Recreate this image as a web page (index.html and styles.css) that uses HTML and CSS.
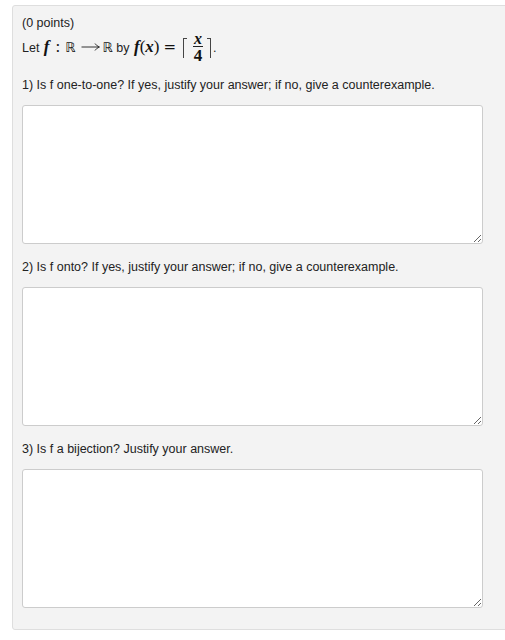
FILE: index.html
```html
<!DOCTYPE html>
<html>
<head>
<meta charset="utf-8">
<link rel="stylesheet" href="styles.css">
</head>
<body>
<div class="panel">
  <p class="pts">(0 points)</p>
  <p class="stmt">Let <span class="math"><span class="mi f1">f</span><span class="mo colon">:</span><span class="ds">ℝ</span><svg class="arrow" width="19" height="10" viewBox="0 0 19 10"><path d="M0.5 5H18M14 1.5Q15.5 4 18.5 5Q15.5 6 14 8.5" fill="none" stroke="#333" stroke-width="1"/></svg><span class="ds">ℝ</span></span> by <span class="math"><span class="mi f2">f</span><span class="mp">(</span><span class="mi">x</span><span class="mp">)</span><span class="eq">=</span><span class="ceil lc"></span><span class="frac"><span class="num">x</span><span class="den">4</span></span><span class="ceil rc"></span></span>.</p>
  <p class="q q1">1) Is f one-to-one? If yes, justify your answer; if no, give a counterexample.</p>
  <textarea class="ans"></textarea>
  <p class="q">2) Is f onto? If yes, justify your answer; if no, give a counterexample.</p>
  <textarea class="ans"></textarea>
  <p class="q">3) Is f a bijection? Justify your answer.</p>
  <textarea class="ans"></textarea>
</div>
</body>
</html>
```
FILE: styles.css
```css
html, body {
  margin: 0;
  padding: 0;
  overflow: hidden;
  background: #ffffff;
}
body {
  font-family: "Liberation Sans", Arial, sans-serif;
  font-size: 12.5px;
  color: #222;
}
.panel {
  margin: 5px 0 0 12px;
  width: 520px;
  box-sizing: border-box;
  background: #f3f3f3;
  border: 1px solid #dedede;
  border-radius: 3px;
  padding: 10px 0 21px 9px;
}
p {
  margin: 0;
  line-height: 14px;
}
.stmt {
  margin-top: 2px;
  white-space: nowrap;
}
.math {
  font-family: "Liberation Serif", "DejaVu Serif", serif;
  font-size: 17px;
  color: #111;
}
.mi {
  font-style: italic;
  font-weight: bold;
}
.f1 { margin-left: 1px; }
.f2 { margin-left: 1px; }
.mp {
  font-weight: normal;
}
.colon { margin: 0 5px 0 6px; }
.ds {
  font-family: "DejaVu Sans", sans-serif;
  font-size: 13px;
}
.arrow {
  display: inline-block;
  vertical-align: 0px;
  margin: 0 3px 0 5px;
}
.eq {
  font-family: "DejaVu Sans", sans-serif;
  font-size: 15px;
  margin: 0 5px 0 4px;
}
.ceil {
  display: inline-block;
  width: 3px;
  height: 19px;
  vertical-align: -6px;
  border-top: 1px solid #444;
}
.lc {
  border-left: 1px solid #444;
  margin-left: 2px;
}
.rc {
  border-right: 1px solid #444;
  margin-right: 2px;
}
.frac {
  display: inline-flex;
  flex-direction: column;
  align-items: center;
  vertical-align: middle;
  margin: 0 4px 0 6px;
}
.num {
  font-style: italic;
  font-weight: bold;
  font-size: 16px;
  line-height: 13px;
  padding: 0 1px 1px;
  border-bottom: 1px solid #222;
}
.den {
  font-weight: bold;
  font-size: 17px;
  line-height: 17px;
}
.q1 {
  margin-top: 14px;
}
.ans {
  display: block;
  width: 461px;
  height: 139px;
  box-sizing: border-box;
  margin: 13px 0 0 0;
  border: 1px solid #cccccc;
  border-radius: 3px;
  background: #fff;
  padding: 4px;
  font-family: inherit;
  font-size: 12px;
}
.ans + .q {
  margin-top: 16px;
}
```
